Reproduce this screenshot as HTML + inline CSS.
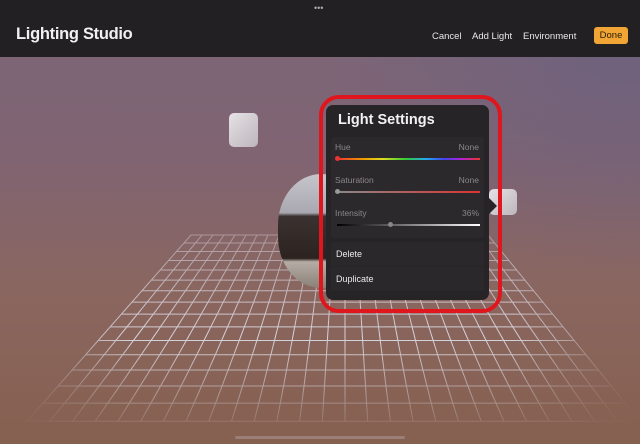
<!DOCTYPE html>
<html><head><meta charset="utf-8"><style>
*{margin:0;padding:0;box-sizing:border-box}
html,body{width:640px;height:444px;overflow:hidden}
body{position:relative;font-family:"Liberation Sans",sans-serif;
background:linear-gradient(180deg,#7b6679 0%,#806472 35%,#8a6660 65%,#86604f 100%)}
.tint{position:absolute;inset:0;background:radial-gradient(ellipse 420px 300px at 620px 60px,rgba(100,95,130,.55),transparent 70%)}
.hdr{position:absolute;left:0;top:0;width:640px;height:57px;background:#222023}
.dots{position:absolute;left:314px;top:3px;color:#aaa;font-size:9px}
.title{position:absolute;left:16px;top:25px;color:#f0f0f0;font-size:16.5px;font-weight:bold;letter-spacing:-.3px}
.nav{position:absolute;top:31px;color:#e8e8e8;font-size:9.5px}
.done{position:absolute;left:594px;top:27px;width:34px;height:17px;background:#f0a535;border-radius:3px;color:#2a1d08;font-size:9.5px;text-align:center;line-height:17px}
svg{position:absolute;left:0;top:0}
.cube{position:absolute;border-radius:5px;background:linear-gradient(135deg,#e6e2e6,#bdb5bb)}
.sphere{position:absolute;left:278px;top:174px;width:86px;height:114px;border-radius:50%/45%;overflow:hidden;
background:linear-gradient(180deg,#c7c5cc 0%,#a9a8b0 34%,#3a3230 37%,#2c2320 74%,#b5ada5 77%,#8a8078 100%)}
.ring{position:absolute;left:319px;top:95px;width:183px;height:218px;border:4px solid #e0161e;border-radius:20px}
.panel{position:absolute;left:326px;top:105px;width:163px;height:195px;background:#272427;border-radius:7px}
.ptitle{position:absolute;left:12px;top:7px;color:#f2f2f2;font-size:14.5px;font-weight:bold}
.sec{position:absolute;left:5px;top:32px;width:153px;height:101px;background:#2c292c;border-radius:3px}
.lbl{position:absolute;left:4px;font-size:8.5px;color:#8a878a}
.val{position:absolute;right:5px;font-size:8.5px;color:#8a878a}
.bar{position:absolute;left:6px;width:143px;height:2px}
.knob{position:absolute;width:5px;height:5px;border-radius:50%}
.item{position:absolute;left:5px;width:153px;height:24px;background:#2b282b;color:#eaeaea;font-size:9px;line-height:24px;padding-left:5px}
.arrow{position:absolute;left:489px;top:198px;width:0;height:0;border-top:8px solid transparent;border-bottom:8px solid transparent;border-left:8px solid #272427}
.home{position:absolute;left:235px;top:436px;width:170px;height:3px;border-radius:2px;background:#9a7e78}
</style></head><body>
<div class="tint"></div>
<svg width="640" height="444" id="g"></svg>
<div class="cube" style="left:229px;top:113px;width:29px;height:34px"></div>
<div class="cube" style="left:489px;top:189px;width:28px;height:26px"></div>
<div class="sphere"></div>
<div class="hdr"><div class="dots">•••</div>
<div class="title">Lighting Studio</div>
<div class="nav" style="left:432px">Cancel</div>
<div class="nav" style="left:472px">Add Light</div>
<div class="nav" style="left:523px">Environment</div>
<div class="done">Done</div></div>
<div class="ring"></div>
<div class="arrow"></div>
<div class="panel">
<div class="ptitle">Light Settings</div>
<div class="sec">
<div class="lbl" style="top:5px">Hue</div><div class="val" style="top:5px">None</div>
<div class="bar" style="top:21px;background:linear-gradient(90deg,#e33 0%,#e90 18%,#dd2 32%,#3c3 48%,#2ae 62%,#44e 75%,#a2d 86%,#e33 100%)"></div>
<div class="knob" style="left:4px;top:19px;background:#e33"></div>
<div class="lbl" style="top:38px">Saturation</div><div class="val" style="top:38px">None</div>
<div class="bar" style="top:54px;background:linear-gradient(90deg,#888,#d33)"></div>
<div class="knob" style="left:4px;top:52px;background:#999"></div>
<div class="lbl" style="top:71px">Intensity</div><div class="val" style="top:71px">36%</div>
<div class="bar" style="top:87px;background:linear-gradient(90deg,#000,#fff)"></div>
<div class="knob" style="left:57px;top:85px;background:#888"></div>
</div>
<div class="item" style="top:137px">Delete</div>
<div class="item" style="top:162px">Duplicate</div>
</div>
<div class="home"></div>
<script>
var s='',vx=345,vy=60,y0=235,w=11;
var ys=[],y=y0,dy=8;while(y<430){ys.push(y);y+=dy;dy*=1.06;}
var ye=ys[ys.length-1];var kmin=-14,kmax=13;
for(var k=kmin;k<=kmax;k++){var x0=vx+k*w;var t=(ye-vy)/(y0-vy);
s+='<line x1="'+x0+'" y1="'+y0+'" x2="'+(vx+(x0-vx)*t)+'" y2="'+ye+'"/>';}
ys.forEach(function(y){var t=(y-vy)/(y0-vy);s+='<line x1="'+(vx+kmin*w*t)+'" y1="'+y+'" x2="'+(vx+kmax*w*t)+'" y2="'+y+'"/>';});
document.getElementById('g').innerHTML='<defs><linearGradient id="f" x1="0" y1="0" x2="0" y2="1"><stop offset="0" stop-color="#fff" stop-opacity=".35"/><stop offset=".5" stop-color="#fff" stop-opacity=".85"/><stop offset="1" stop-color="#fff" stop-opacity="0"/></linearGradient><linearGradient id="h" x1="0" y1="0" x2="1" y2="0"><stop offset="0" stop-color="#000"/><stop offset=".2" stop-color="#fff"/><stop offset=".8" stop-color="#fff"/><stop offset="1" stop-color="#000"/></linearGradient><mask id="mh"><rect x="0" y="0" width="640" height="444" fill="url(#h)"/></mask><mask id="m"><rect x="0" y="230" width="640" height="214" fill="url(#f)" mask="url(#mh)"/></mask></defs><g mask="url(#m)" stroke="#e6e8f4" stroke-width="1">'+s+'</g>';
</script>
</body></html>
